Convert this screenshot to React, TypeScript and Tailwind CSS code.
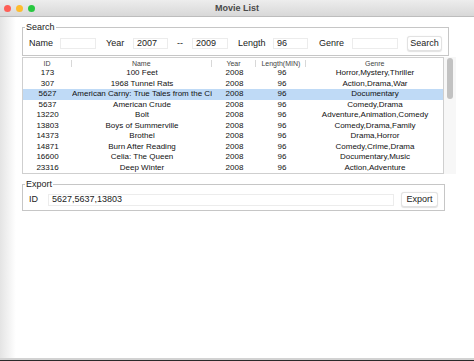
import React from "react";

type Movie = {
  id: number;
  name: string;
  year: number;
  length: number;
  genre: string;
};

const movies: Movie[] = [
  { id: 173, name: "100 Feet", year: 2008, length: 96, genre: "Horror,Mystery,Thriller" },
  { id: 307, name: "1968 Tunnel Rats", year: 2008, length: 96, genre: "Action,Drama,War" },
  { id: 5627, name: "American Carny: True Tales from the Circus", year: 2008, length: 96, genre: "Documentary" },
  { id: 5637, name: "American Crude", year: 2008, length: 96, genre: "Comedy,Drama" },
  { id: 13220, name: "Bolt", year: 2008, length: 96, genre: "Adventure,Animation,Comedy" },
  { id: 13803, name: "Boys of Summerville", year: 2008, length: 96, genre: "Comedy,Drama,Family" },
  { id: 14373, name: "Brothel", year: 2008, length: 96, genre: "Drama,Horror" },
  { id: 14871, name: "Burn After Reading", year: 2008, length: 96, genre: "Comedy,Crime,Drama" },
  { id: 16600, name: "Celia: The Queen", year: 2008, length: 96, genre: "Documentary,Music" },
  { id: 23316, name: "Deep Winter", year: 2008, length: 96, genre: "Action,Adventure" },
];

const SELECTED = 5627;

function Field({ value, className }: { value?: string; className: string }) {
  return (
    <div
      className={`flex h-[11px] items-center border border-[#ececec] bg-white pl-[3px] text-[9px] leading-none text-[#222] ${className}`}
    >
      {value}
    </div>
  );
}

function Button({ label, className }: { label: string; className: string }) {
  return (
    <div
      className={`flex h-[15px] items-center justify-center rounded-[3px] border border-[#e2e2e2] bg-white text-[9px] leading-none text-[#222] shadow-[0_0.5px_1px_rgba(0,0,0,0.12)] ${className}`}
    >
      {label}
    </div>
  );
}

function HeaderSep() {
  return <div className="h-[7px] w-px self-center bg-[#d8d8d8]" />;
}

export default function App() {
  return (
    <div
      className="flex h-[361px] w-[474px] flex-col overflow-hidden bg-white text-[#111]"
      style={{ fontFamily: '"Liberation Sans", Arial, sans-serif' }}
    >
      {/* title bar */}
      <div className="grid h-[17px] shrink-0 grid-cols-[1fr_auto_1fr] items-center border-b border-[#bdbdbd] bg-gradient-to-b from-[#ededed] to-[#d8d8d8]">
        <div className="flex items-center gap-[5px] pl-[4px]">
          <span className="h-[7px] w-[7px] rounded-full bg-[#fe5f57]" />
          <span className="h-[7px] w-[7px] rounded-full bg-[#febc2e]" />
          <span className="h-[7px] w-[7px] rounded-full bg-[#28c840]" />
        </div>
        <div className="text-[9px] font-bold leading-none text-[#4a4a4a]">Movie List</div>
        <div />
      </div>

      <div className="flex flex-1">
        <div className="w-[16px] bg-gradient-to-r from-[#e4e4e4] to-white" />
        <div className="flex flex-col items-start pl-[6px]">
          {/* search group */}
          <fieldset className="mt-[5px] w-[427px] border border-[#c6c6c6] px-0 pb-[6px] pt-[6px]">
            <legend className="ml-[2px] px-[1px] text-[9px] leading-[10px] text-[#222]">Search</legend>
            <div className="flex items-center text-[9px] leading-none text-[#222]">
              <span className="ml-[6px] w-[31px]">Name</span>
              <Field className="w-[36px]" />
              <span className="ml-[10px] w-[27px]">Year</span>
              <Field className="w-[35px]" value="2007" />
              <span className="w-[24px] text-center">--</span>
              <Field className="w-[36px]" value="2009" />
              <span className="ml-[10px] w-[35px]">Length</span>
              <Field className="w-[35px]" value="96" />
              <span className="ml-[11px] w-[33px]">Genre</span>
              <Field className="w-[46px]" />
              <Button label="Search" className="-my-[2px] ml-[9px] w-[35px]" />
            </div>
          </fieldset>

          {/* table */}
          <div className="mt-px flex">
            <div className="w-[422px] border border-[#cfcfcf] bg-white">
              <div className="flex h-[10px] items-center text-[7px] leading-none text-[#444]">
                <div className="w-[48px] text-center">ID</div>
                <HeaderSep />
                <div className="w-[139px] text-center">Name</div>
                <HeaderSep />
                <div className="w-[44px] text-center">Year</div>
                <HeaderSep />
                <div className="w-[49px] text-center">Length(MIN)</div>
                <HeaderSep />
                <div className="w-[137px] text-center">Genre</div>
              </div>
              {movies.map((m) => (
                <div
                  key={m.id}
                  className={`grid h-[10.5px] grid-cols-[49px_140px_45px_50px_136px] items-center text-[8px] leading-none ${
                    m.id === SELECTED ? "bg-[#bfdaf6]" : ""
                  }`}
                >
                  <div className="text-center">{m.id}</div>
                  <div className="overflow-hidden whitespace-nowrap text-center">{m.name}</div>
                  <div className="text-center">{m.year}</div>
                  <div className="text-center">{m.length}</div>
                  <div className="text-center">{m.genre}</div>
                </div>
              ))}
            </div>
            <div className="w-[12px] bg-[#f7f7f7] pl-[3px] pt-[1px]">
              <div className="h-[41px] w-[6px] rounded-full bg-[#c2c2c2]" />
            </div>
          </div>

          {/* export group */}
          <fieldset className="mt-[5px] w-[423px] border border-[#c6c6c6] px-0 pb-[3px] pt-[3px]">
            <legend className="ml-[2px] px-[1px] text-[9px] leading-[10px] text-[#222]">Export</legend>
            <div className="flex items-center text-[9px] leading-none text-[#222]">
              <span className="ml-[6px] w-[19px]">ID</span>
              <Field className="h-[12px] w-[346px] pl-[1px]" value="5627,5637,13803" />
              <Button label="Export" className="ml-[7px] w-[37px]" />
            </div>
          </fieldset>
        </div>
      </div>

      <div className="h-[2px] shrink-0 bg-[#d2d2d2]" />
      <div className="h-px shrink-0 bg-[#2a2a2a]" />
    </div>
  );
}
